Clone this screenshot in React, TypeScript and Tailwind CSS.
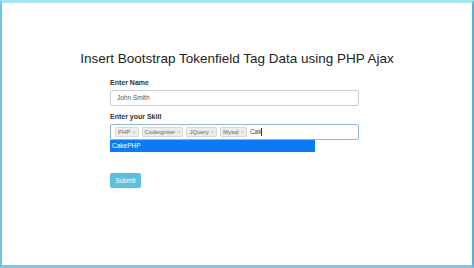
import React from "react";

const tokens = ["PHP", "Codeigniter", "JQuery", "Mysql"];

const Token = ({ label }: { label: string }) => (
    <span className="flex items-center gap-[2px] h-[10px] px-[2px] bg-[#ededed] border border-[#d9d9d9] rounded-[1px] text-[6px] text-[#666]">
        {label}
        <span className="text-[5.5px] text-[#bbb]">×</span>
    </span>
);

export default function App() {
    return (
        <div
            className="w-[474px] h-[268px] bg-white border-x-2 border-t-[3px] border-b-[3px] border-l-[#6cc8e2] border-r-[#4fb3da] border-t-[#a6e4f0] border-b-[#7cc6e0] flex flex-col"
            style={{ fontFamily: '"Liberation Sans", Arial, sans-serif' }}
        >
            <h3 className="mt-[48px] text-center text-[13.5px] leading-[15px] text-[#222]">
                Insert Bootstrap Tokenfield Tag Data using PHP Ajax
            </h3>

            <div className="mt-[12px] ml-[108px] w-[249px] flex flex-col">
                <label className="text-[7px] font-bold text-[#333] leading-[9px]">Enter Name</label>
                <div className="mt-[3px] h-[16px] border border-[#ccc] rounded-[2px] flex items-center px-[6px] text-[6.5px] text-[#555]">
                    John Smith
                </div>

                <label className="mt-[6px] text-[7px] font-bold text-[#333] leading-[9px]">Enter your Skill</label>
                <div className="mt-[3px] relative">
                    <div className="h-[16px] border border-[#8fb6d8] rounded-[2px] flex items-center gap-[3px] px-[4px] text-[6.5px] text-[#555]">
                        {tokens.map((t) => (
                            <Token key={t} label={t} />
                        ))}
                        <span className="text-[#444]">Cak<span className="inline-block w-px h-[8px] bg-[#333] align-middle"></span></span>
                    </div>
                    <div className="absolute left-0 top-[16px] w-[205px] h-[12px] bg-[#0a7bf2] text-white text-[6.5px] flex items-center px-[2px]">
                        CakePHP
                    </div>
                </div>

                <button className="mt-[33px] w-[31px] h-[15px] bg-[#5bc0de] rounded-[2px] text-white text-[6.5px] flex items-center justify-center">
                    Submit
                </button>
            </div>
        </div>
    );
}
